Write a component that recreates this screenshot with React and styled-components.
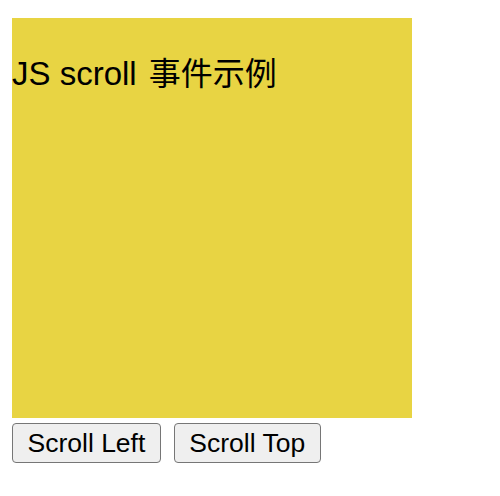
import React from 'react';
import styled, { createGlobalStyle } from 'styled-components';

const GlobalStyle = createGlobalStyle`
  body {
    margin: 0;
    background: #ffffff;
    font-family: "Liberation Sans", Arial, "Noto Sans CJK SC", sans-serif;
  }
`;

const Page = styled.div`
  padding: 18px 12px;
`;

// 滚动容器
const ScrollBox = styled.div`
  width: 400px;
  height: 400px;
  box-sizing: border-box;
  padding-top: 35px;
  background-color: #e8d443;
  overflow: hidden;
`;

const Title = styled.p`
  margin: 0;
  font-size: 33px;
  line-height: 37px;
  color: #000;
  white-space: nowrap;
`;

const Han = styled.span`
  font-family: "Noto Sans CJK SC", sans-serif;
  font-size: 32px;
  margin-left: 3px;
`;

const Controls = styled.div`
  display: flex;
  gap: 13px;
  margin-top: 5px;
`;

const Button = styled.button`
  height: 40px;
  padding: 0 14.5px;
  font-family: "Liberation Sans", Arial, sans-serif;
  font-size: 26.5px;
  color: #000;
  background-color: #efefef;
  border: 1px solid #767676;
  border-radius: 4px;
  cursor: pointer;
`;

function App() {
  return (
    <Page>
      <GlobalStyle />
      <ScrollBox>
        <Title>
          JS scroll <Han>事件示例</Han>
        </Title>
      </ScrollBox>
      <Controls>
        <Button>Scroll Left</Button>
        <Button>Scroll Top</Button>
      </Controls>
    </Page>
  );
}

export default App;
